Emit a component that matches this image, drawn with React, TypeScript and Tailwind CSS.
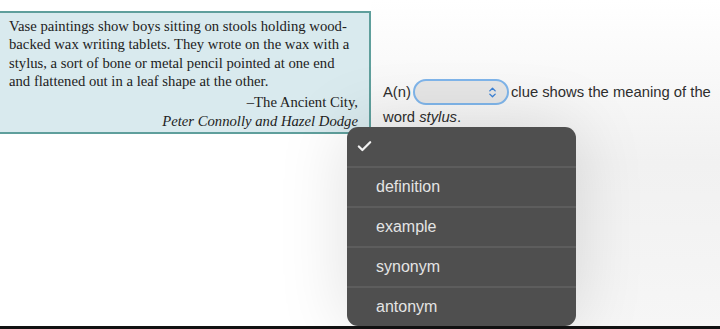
import { Check, ChevronsUpDown } from "lucide-react";

const OPTIONS = ["definition", "example", "synonym", "antonym"];

export default function App() {
  return (
    <div className="relative h-[329px] w-[720px] overflow-hidden bg-white">
      <div className="flex h-[326px]">
        {/* Passage */}
        <div className="w-[371px] shrink-0 pt-[11px]">
          <div
            className="border-y-2 border-r-2 border-[#5f9f9c] bg-[#d9eaee] pb-[1px] pl-[9px] pr-[11px] pt-[4px] text-[14.7px] leading-[18.3px] text-[#222]"
            style={{ fontFamily: '"Liberation Serif", "DejaVu Serif", serif' }}
          >
            <p className="whitespace-nowrap">
              Vase paintings show boys sitting on stools holding wood-
              <br />
              backed wax writing tablets. They wrote on the wax with a
              <br />
              stylus, a sort of bone or metal pencil pointed at one end
              <br />
              and flattened out in a leaf shape at the other.
            </p>
            <p className="mt-[3px] text-right">–The Ancient City,</p>
            <p className="mt-[1px] text-right italic">Peter Connolly and Hazel Dodge</p>
          </div>
        </div>

        {/* Question */}
        <div className="flex-1 bg-gradient-to-b from-white via-[#f1f1f1] to-[#f6f6f6] pl-[12px] pr-2 pt-[79px]">
          <div
            className="text-[14.8px] leading-[24px] text-[#2e2e2e]"
            style={{ fontFamily: '"Liberation Sans", Arial, sans-serif' }}
          >
            <div className="flex items-center">
              <span>A(n)</span>
              <span className="mx-[2px] flex h-[26px] w-[96px] items-center justify-end rounded-full border-2 border-[#7fb5ea] bg-[#e6e6e6] pr-[8px]">
                <ChevronsUpDown className="h-[13px] w-[13px] text-[#3b82d6]" strokeWidth={2.5} />
              </span>
              <span>clue shows the meaning of the</span>
            </div>
            <div>
              word <i>stylus</i>.
            </div>
          </div>
        </div>
      </div>

      {/* Open select menu */}
      <div
        className="absolute left-[347px] top-[127px] w-[229px] overflow-hidden rounded-[11px] bg-[#4f4f4f] shadow-[0_0_70px_rgba(0,0,0,0.13)]"
        style={{ fontFamily: '"Liberation Sans", Arial, sans-serif' }}
      >
        <div className="flex h-[39px] items-center pl-[9px]">
          <Check className="h-[17px] w-[17px] text-[#f2f2f2]" strokeWidth={3.2} />
        </div>
        {OPTIONS.map((o) => (
          <div
            key={o}
            className="flex h-[40px] items-center border-t-2 border-[#5d5d5d] pl-[29px] text-[16px] text-[#e4e4e4]"
          >
            {o}
          </div>
        ))}
      </div>

      <div className="absolute inset-x-0 bottom-0 h-[3px] bg-[#111]" />
    </div>
  );
}
